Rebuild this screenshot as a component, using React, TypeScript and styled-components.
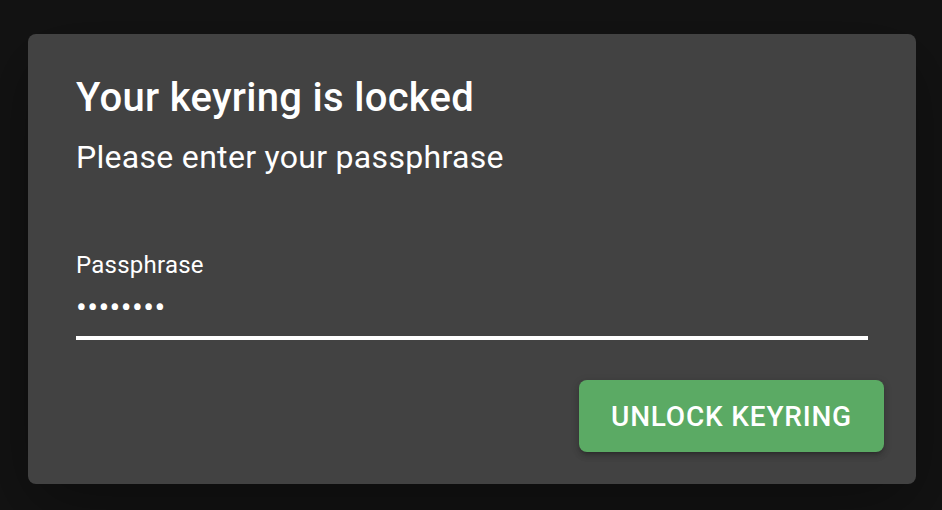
import React from 'react';
import styled, { createGlobalStyle } from 'styled-components';

const GlobalStyle = createGlobalStyle`
  html, body {
    margin: 0;
    padding: 0;
    background: #131313;
    font-family: Roboto, "Liberation Sans", sans-serif;
    color: #fff;
  }
  * {
    box-sizing: border-box;
  }
`;

const Page = styled.div`
  width: 942px;
  height: 510px;
  padding: 34px 26px 26px 28px;
`;

const Dialog = styled.div`
  width: 888px;
  height: 450px;
  background: #424242;
  border-radius: 8px;
  box-shadow: 0 22px 70px rgba(0, 0, 0, 0.35);
  display: flex;
  flex-direction: column;
  padding: 32px 0;
`;

const Title = styled.h2`
  margin: 0;
  padding: 0 48px;
  font-size: 40px;
  font-weight: 500;
  line-height: 64px;
  letter-spacing: 0.0075em;
`;

const Subtitle = styled.p`
  margin: 3px 0 0;
  padding: 0 48px;
  font-size: 32px;
  font-weight: 400;
  line-height: 48px;
  letter-spacing: 0.00938em;
`;

const Field = styled.label`
  display: flex;
  flex-direction: column;
  margin: 70px 48px 0;
`;

const Label = styled.span`
  font-size: 24px;
  line-height: 28px;
  letter-spacing: 0.01em;
  color: #fff;
`;

const PassInput = styled.input`
  width: 100%;
  height: 61px;
  padding: 10px 0 11px;
  background: transparent;
  border: none;
  border-bottom: 4px solid #fff;
  outline: none;
  color: #fff;
  font-family: Roboto, "Liberation Sans", sans-serif;
  font-size: 32px;
  letter-spacing: 0.4px;
`;

const Actions = styled.div`
  margin-top: auto;
  display: flex;
  justify-content: flex-end;
  padding: 0 32px;
`;

const UnlockButton = styled.button`
  height: 72px;
  padding: 0 32px;
  border: none;
  border-radius: 8px;
  background: #5baa64;
  color: #fff;
  font-family: Roboto, "Liberation Sans", sans-serif;
  font-size: 28px;
  font-weight: 500;
  letter-spacing: 0.02857em;
  text-transform: uppercase;
  box-shadow: 0 3px 3px -2px rgba(0, 0, 0, 0.2), 0 4px 6px 0 rgba(0, 0, 0, 0.14),
    0 2px 10px 0 rgba(0, 0, 0, 0.12);
  cursor: pointer;
`;

export default function App() {
  return (
    <>
      <GlobalStyle />
      <Page>
        <Dialog>
          <Title>Your keyring is locked</Title>
          <Subtitle>Please enter your passphrase</Subtitle>
          <Field>
            <Label>Passphrase</Label>
            <PassInput type="password" defaultValue="abcdefgh" readOnly />
          </Field>
          <Actions>
            <UnlockButton>Unlock keyring</UnlockButton>
          </Actions>
        </Dialog>
      </Page>
    </>
  );
}
